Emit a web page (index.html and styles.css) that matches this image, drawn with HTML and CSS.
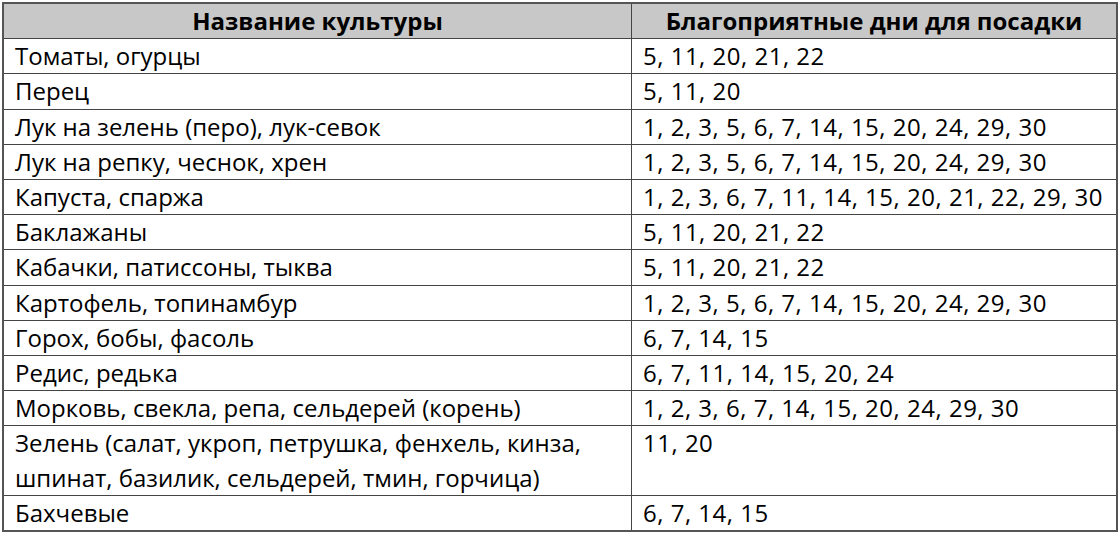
FILE: index.html
```html
<!DOCTYPE html>
<html lang="ru">
<head>
<meta charset="utf-8">
<title>Благоприятные дни для посадки</title>
<link rel="stylesheet" href="styles.css">
</head>
<body>
<table class="plan">
  <thead>
    <tr><th class="col-name">Название культуры</th><th class="col-days">Благоприятные дни для посадки</th></tr>
  </thead>
  <tbody>
    <tr><td>Томаты, огурцы</td><td class="days">5, 11, 20, 21, 22</td></tr>
    <tr><td>Перец</td><td class="days">5, 11, 20</td></tr>
    <tr><td>Лук на зелень (перо), лук-севок</td><td class="days">1, 2, 3, 5, 6, 7, 14, 15, 20, 24, 29, 30</td></tr>
    <tr><td>Лук на репку, чеснок, хрен</td><td class="days">1, 2, 3, 5, 6, 7, 14, 15, 20, 24, 29, 30</td></tr>
    <tr><td>Капуста, спаржа</td><td class="days">1, 2, 3, 6, 7, 11, 14, 15, 20, 21, 22, 29, 30</td></tr>
    <tr><td>Баклажаны</td><td class="days">5, 11, 20, 21, 22</td></tr>
    <tr><td>Кабачки, патиссоны, тыква</td><td class="days">5, 11, 20, 21, 22</td></tr>
    <tr><td>Картофель, топинамбур</td><td class="days">1, 2, 3, 5, 6, 7, 14, 15, 20, 24, 29, 30</td></tr>
    <tr><td>Горох, бобы, фасоль</td><td class="days">6, 7, 14, 15</td></tr>
    <tr><td>Редис, редька</td><td class="days">6, 7, 11, 14, 15, 20, 24</td></tr>
    <tr><td>Морковь, свекла, репа, сельдерей (корень)</td><td class="days">1, 2, 3, 6, 7, 14, 15, 20, 24, 29, 30</td></tr>
    <tr><td>Зелень (салат, укроп, петрушка, фенхель, кинза,<br>шпинат, базилик, сельдерей, тмин, горчица)</td><td class="days top">11, 20</td></tr>
    <tr><td>Бахчевые</td><td class="days">6, 7, 14, 15</td></tr>
  </tbody>
</table>
</body>
</html>
```
FILE: styles.css
```css
html, body {
  margin: 0;
  padding: 0;
  background: #ffffff;
}

body {
  padding: 2px 2px 0 2px;
  font-family: "Open Sans", "Noto Sans", sans-serif;
  color: #000000;
}

.plan {
  width: 1116px;
  border-collapse: collapse;
  table-layout: fixed;
  border: 2px solid #555555;
  font-size: 24px;
  line-height: 34.2px;
}

.plan th,
.plan td {
  border: 1px solid #454545;
  padding: 0 11px;
  text-align: left;
  vertical-align: middle;
  white-space: nowrap;
}

.plan th {
  background: #c8c8c8;
  font-weight: 700;
  text-align: center;
  color: #000000;
}

.col-name { width: 605px; }
.col-days { width: auto; }

.plan td.days {
  letter-spacing: 0.5px;
}

.plan td.top {
  vertical-align: top;
}
```
